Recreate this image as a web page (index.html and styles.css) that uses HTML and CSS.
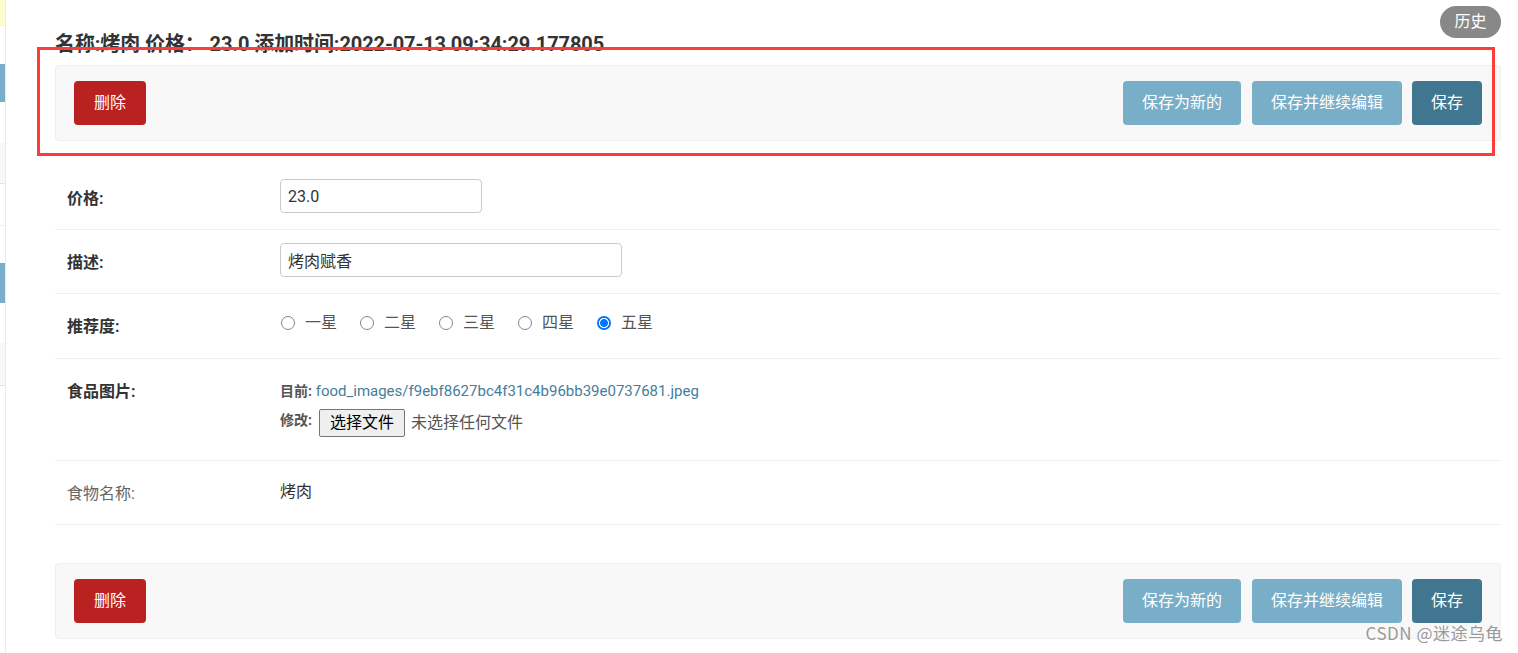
FILE: index.html
```html
<!DOCTYPE html>
<html lang="zh-CN">
<head>
<meta charset="utf-8">
<title>修改 食物</title>
<link rel="stylesheet" href="styles.css">
</head>
<body>
<div class="page">
  <nav class="sidebar">
    <div class="seg seg-1"></div>
    <div class="seg seg-2"></div>
    <div class="seg seg-3"></div>
    <div class="seg seg-4"></div>
    <div class="seg seg-5"></div>
    <div class="seg seg-6"></div>
    <div class="seg seg-7"></div>
    <div class="seg seg-8"></div>
    <div class="seg seg-9"></div>
    <div class="seg seg-10"></div>
    <div class="seg seg-11"></div>
  </nav>
  <main class="content">
    <div class="header">
      <h1 class="title">名称:烤肉 价格： 23.0 添加时间:2022-07-13 09:34:29.177805</h1>
      <a class="history">历史</a>
    </div>

    <div class="submit-row">
      <a class="btn btn-delete">删除</a>
      <div class="actions">
        <button class="btn btn-light">保存为新的</button>
        <button class="btn btn-light btn-continue">保存并继续编辑</button>
        <button class="btn btn-dark">保存</button>
      </div>
    </div>

    <div class="form">
      <div class="row">
        <label class="label">价格:</label>
        <div class="field"><input class="text price" type="text" value="23.0"></div>
      </div>
      <div class="row">
        <label class="label">描述:</label>
        <div class="field"><input class="text desc" type="text" value="烤肉赋香"></div>
      </div>
      <div class="row">
        <label class="label">推荐度:</label>
        <div class="field">
          <ul class="radios">
            <li class="radio-item"><span class="radio"></span><span class="radio-text">一星</span></li>
            <li class="radio-item"><span class="radio"></span><span class="radio-text">二星</span></li>
            <li class="radio-item"><span class="radio"></span><span class="radio-text">三星</span></li>
            <li class="radio-item"><span class="radio"></span><span class="radio-text">四星</span></li>
            <li class="radio-item"><span class="radio checked"></span><span class="radio-text">五星</span></li>
          </ul>
        </div>
      </div>
      <div class="row">
        <label class="label">食品图片:</label>
        <div class="field">
          <div class="current"><b class="small-label">目前:</b> <a class="link">food_images/f9ebf8627bc4f31c4b96bb39e0737681.jpeg</a></div>
          <div class="change">
            <b class="small-label change-label">修改:</b>
            <span class="file-btn">选择文件</span>
            <span class="file-none">未选择任何文件</span>
          </div>
        </div>
      </div>
      <div class="row">
        <label class="label label-plain">食物名称:</label>
        <div class="field"><div class="readonly">烤肉</div></div>
      </div>
    </div>

    <div class="submit-row submit-bottom">
      <a class="btn btn-delete">删除</a>
      <div class="actions">
        <button class="btn btn-light">保存为新的</button>
        <button class="btn btn-light btn-continue">保存并继续编辑</button>
        <button class="btn btn-dark">保存</button>
      </div>
    </div>
  </main>
</div>
<div class="annotation"></div>
<div class="watermark">CSDN @迷途乌龟</div>
</body>
</html>
```

FILE: styles.css
```css
html, body {
  margin: 0;
  padding: 0;
  background: #fff;
}
body {
  width: 1518px;
  height: 653px;
  overflow: hidden;
  font-family: Roboto, "Noto Sans CJK SC", sans-serif;
  color: #333;
}
.page {
  display: flex;
  align-items: flex-start;
  height: 653px;
}

/* collapsed sidebar strip */
.sidebar {
  width: 5px;
  flex: none;
  height: 653px;
  border-right: 1px solid #eaeaea;
  display: flex;
  flex-direction: column;
}
.seg { flex: none; }
.seg-1 { height: 25px; background: #fffccf; border-bottom: 1px solid #eee; }
.seg-2 { height: 38px; background: #fff; }
.seg-3 { height: 38px; background: #79aec8; }
.seg-4 { height: 41px; background: #fff; }
.seg-5 { height: 40px; background: #f8f8f8; border-bottom: 1px solid #e4e4e4; }
.seg-6 { height: 41px; background: #fff; border-bottom: 1px solid #eee; }
.seg-7 { height: 37px; background: #fff; }
.seg-8 { height: 40px; background: #79aec8; }
.seg-9 { height: 40px; background: #fff; }
.seg-10 { height: 42px; background: #f8f8f8; border-bottom: 1px solid #e4e4e4; }
.seg-11 { flex: 1; background: #fff; }

.content {
  flex: 1;
  padding: 6px 17px 0 49px;
  min-width: 0;
}

.header {
  display: flex;
  justify-content: space-between;
  align-items: flex-start;
}
.title {
  margin: 26px 0 0;
  font-size: 20px;
  line-height: 24px;
  font-weight: 700;
  letter-spacing: -0.1px;
  color: #333;
  white-space: nowrap;
}
.history {
  flex: none;
  height: 32px;
  line-height: 32px;
  padding: 0 14.5px;
  border-radius: 16px;
  background: #888;
  color: #fff;
  font-size: 16px;
}

.submit-row {
  margin-top: 9px;
  display: flex;
  justify-content: space-between;
  align-items: center;
  padding: 15px 18px;
  border: 1px solid #eee;
  border-radius: 4px;
  background: #f8f8f8;
}
.submit-bottom { margin-top: 38px; }
.actions {
  display: flex;
  gap: 10px;
}
.btn {
  display: block;
  height: 44px;
  line-height: 44px;
  padding: 0 19px;
  border: 0;
  border-radius: 4px;
  font-family: Roboto, "Noto Sans CJK SC", sans-serif;
  font-size: 16px;
  color: #fff;
  cursor: pointer;
}
.btn-delete { background: #ba2121; padding: 0 20px; }
.btn-light { background: #79aec8; }
.btn-continue { margin-left: 1px; }
.btn-dark { background: #417690; }

.form { margin-top: 25px; }
.row {
  display: flex;
  padding: 13px 12px 16px;
  border-bottom: 1px solid #eee;
}
.label {
  flex: none;
  width: 213px;
  margin-top: 10px;
  font-size: 16px;
  line-height: 20px;
  font-weight: 700;
  color: #333;
}
.label-plain {
  font-weight: 400;
  color: #666;
}
.field { flex: 1; }
.text {
  display: block;
  box-sizing: border-box;
  height: 34px;
  margin: 0;
  padding: 0 7px;
  border: 1px solid #ccc;
  border-radius: 4px;
  font-family: Roboto, "Noto Sans CJK SC", sans-serif;
  font-size: 16px;
  color: #333;
  background: #fff;
}
.price { width: 202px; }
.desc { width: 342px; }

.radios {
  list-style: none;
  margin: 0;
  padding: 0;
  height: 35px;
  display: flex;
  align-items: flex-start;
}
.radio-item {
  display: flex;
  align-items: center;
  height: 32px;
  margin-right: 22px;
}
.radio {
  box-sizing: border-box;
  width: 14px;
  height: 14px;
  margin: 0 10px 0 1px;
  border: 1.5px solid #858585;
  border-radius: 50%;
  background: #fff;
}
.radio.checked {
  border: 0;
  background: radial-gradient(circle, #0075ff 0 3.6px, #fff 4.2px 4.8px, #0075ff 5.3px);
}
.radio-text {
  font-size: 16px;
  line-height: 20px;
  color: #555;
}

.current {
  margin-top: 9px;
  line-height: 20px;
  font-size: 15px;
}
.small-label {
  font-weight: 700;
  font-size: 14px;
  color: #555;
}
.link {
  color: #447e9b;
  font-size: 15px;
}
.change {
  margin: 8px 0 7px;
  display: flex;
  align-items: flex-start;
}
.change-label {
  line-height: 20px;
  margin-top: 1px;
}
.file-btn {
  box-sizing: border-box;
  height: 28px;
  line-height: 26px;
  margin-left: 7px;
  padding: 0 10px;
  border: 1px solid #767676;
  border-radius: 2px;
  background: #efefef;
  font-size: 16px;
  color: #000;
}
.file-none {
  margin-left: 6px;
  line-height: 28px;
  font-size: 16px;
  color: #555;
}
.readonly {
  box-sizing: border-box;
  height: 34px;
  padding-top: 8px;
  line-height: 20px;
  font-size: 16px;
  color: #333;
}

.annotation {
  position: absolute;
  left: 37px;
  top: 47px;
  width: 1458px;
  height: 109px;
  box-sizing: border-box;
  border: 3px solid #ff3b3b;
  pointer-events: none;
}
.watermark {
  position: absolute;
  right: 15px;
  top: 622px;
  font-family: "Noto Sans CJK SC", sans-serif;
  font-size: 17px;
  line-height: 22px;
  letter-spacing: 0.5px;
  color: #999;
  text-shadow: 0 0 2px #fff;
}
```
